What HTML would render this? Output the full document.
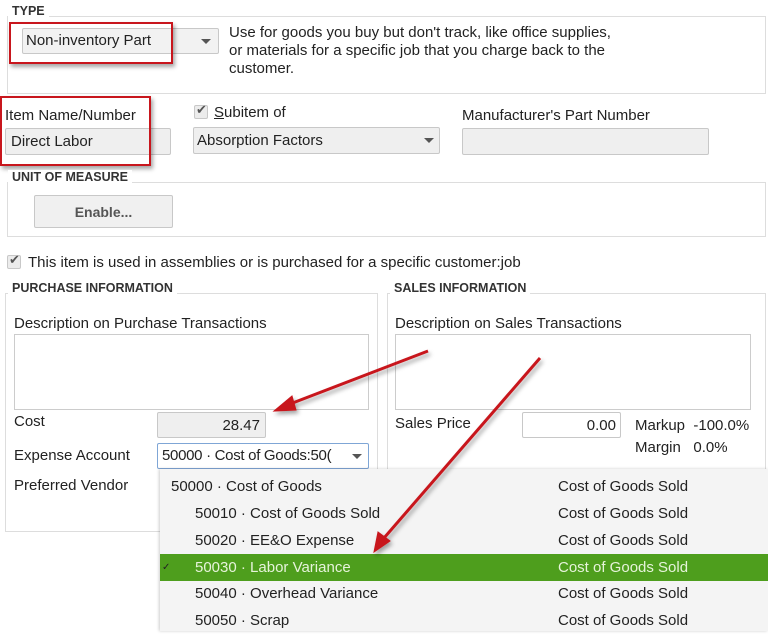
<!DOCTYPE html>
<html><head><meta charset="utf-8"><style>
body{margin:0;width:768px;height:631px;background:#fff;position:relative;overflow:hidden;font-family:"Liberation Sans",Arial,sans-serif;color:#222;font-size:15px}
.a{position:absolute;white-space:nowrap}
.grp{position:absolute;border:1px solid #ddd}
.h{position:absolute;font-size:12.5px;font-weight:bold;color:#333;background:#fff;padding:0 4px}
.fld{position:absolute;border:1px solid #c8c8c8;border-radius:2px;background:#efefef;box-sizing:border-box}
.red{position:absolute;border:2px solid #c8161d;box-shadow:2px 3px 4px rgba(0,0,0,.35)}
.tri{position:absolute;width:0;height:0;border-left:5px solid transparent;border-right:5px solid transparent;border-top:5px solid #555}
.row{position:absolute;left:160px;width:608px;height:27px;line-height:27px}
</style></head><body>
<div class="grp" style="left:7px;top:16px;width:757px;height:76px"></div>
<div class="h" style="left:8px;top:4px">TYPE</div>
<div class="fld" style="left:22px;top:28px;width:197px;height:26px;background:#f2f2f2"></div>
<div class="a" style="left:26px;top:32px">Non-inventory Part</div>
<div class="tri" style="left:201px;top:39px"></div>
<div class="red" style="left:9px;top:22px;width:160px;height:38px"></div>
<div class="a" style="left:229px;top:24px;line-height:18px">Use for goods you buy but don't track, like office supplies,<br>or materials for a specific job that you charge back to the<br>customer.</div>

<div class="a" style="left:5px;top:107px">Item Name/Number</div>
<div class="fld" style="left:5px;top:128px;width:166px;height:27px"></div>
<div class="a" style="left:11px;top:133px">Direct Labor</div>
<div class="red" style="left:0px;top:96px;width:147px;height:66px;box-shadow:2px 3px 4px rgba(0,0,0,.35)"></div>
<div class="fld" style="left:194px;top:105px;width:14px;height:14px;background:#ececec"></div>
<div class="a" style="left:196px;top:102px;font-size:13px;color:#555">✔</div>
<div class="a" style="left:214px;top:104px"><u>S</u>ubitem of</div>
<div class="fld" style="left:193px;top:127px;width:247px;height:27px"></div>
<div class="a" style="left:197px;top:132px">Absorption Factors</div>
<div class="tri" style="left:424px;top:138px"></div>
<div class="a" style="left:462px;top:107px">Manufacturer's Part Number</div>
<div class="fld" style="left:462px;top:128px;width:247px;height:27px"></div>

<div class="grp" style="left:7px;top:182px;width:757px;height:53px"></div>
<div class="h" style="left:8px;top:170px">UNIT OF MEASURE</div>
<div class="fld" style="left:34px;top:195px;width:139px;height:33px;background:#f0f0f0;text-align:center;line-height:32px;font-size:14px;font-weight:bold;color:#555">Enable...</div>

<div class="fld" style="left:7px;top:255px;width:14px;height:14px;background:#ececec"></div>
<div class="a" style="left:9px;top:252px;font-size:13px;color:#555">✔</div>
<div class="a" style="left:28px;top:254px">This item is used in assemblies or is purchased for a specific customer:job</div>

<div class="grp" style="left:5px;top:293px;width:371px;height:237px"></div>
<div class="h" style="left:8px;top:281px">PURCHASE INFORMATION</div>
<div class="grp" style="left:387px;top:293px;width:377px;height:176px"></div>
<div class="h" style="left:390px;top:281px">SALES INFORMATION</div>
<div class="a" style="left:14px;top:315px">Description on Purchase Transactions</div>
<div class="grp" style="left:14px;top:334px;width:353px;height:74px;border-color:#ccc"></div>
<div class="a" style="left:395px;top:315px">Description on Sales Transactions</div>
<div class="grp" style="left:395px;top:334px;width:354px;height:74px;border-color:#ccc"></div>

<div class="a" style="left:14px;top:413px">Cost</div>
<div class="fld" style="left:157px;top:412px;width:109px;height:26px;text-align:right;padding-right:5px;line-height:25px">28.47</div>
<div class="a" style="left:395px;top:415px">Sales Price</div>
<div class="fld" style="left:522px;top:412px;width:99px;height:26px;background:#fff;text-align:right;padding-right:4px;line-height:25px">0.00</div>
<div class="a" style="left:635px;top:417px">Markup &nbsp;-100.0%</div>
<div class="a" style="left:635px;top:439px">Margin &nbsp;&nbsp;0.0%</div>
<div class="a" style="left:14px;top:447px">Expense Account</div>
<div class="fld" style="left:157px;top:443px;width:212px;height:26px;background:#fff;border-color:#7fa6d6;line-height:24px;padding-left:4px;overflow:hidden;letter-spacing:-.3px">50000 · Cost of Goods:50(</div>
<div class="tri" style="left:352px;top:454px"></div>
<div class="a" style="left:14px;top:477px">Preferred Vendor</div>

<div class="a" style="left:160px;top:469px;width:608px;height:162px;background:#f4f4f4;box-shadow:-1px 0 3px rgba(0,0,0,.2)"></div>
<div class="row" style="top:473px"><span class="a" style="left:11px">50000 · Cost of Goods</span><span class="a" style="left:398px">Cost of Goods Sold</span></div>
<div class="row" style="top:500px"><span class="a" style="left:35px">50010 · Cost of Goods Sold</span><span class="a" style="left:398px">Cost of Goods Sold</span></div>
<div class="row" style="top:527px"><span class="a" style="left:35px">50020 · EE&amp;O Expense</span><span class="a" style="left:398px">Cost of Goods Sold</span></div>
<div class="row" style="top:554px;background:#4e9e1d;color:#e6f3da"><span class="a" style="left:2px;font-size:10px;color:#222">✓</span><span class="a" style="left:35px">50030 · Labor Variance</span><span class="a" style="left:398px">Cost of Goods Sold</span></div>
<div class="row" style="top:580px"><span class="a" style="left:35px">50040 · Overhead Variance</span><span class="a" style="left:398px">Cost of Goods Sold</span></div>
<div class="row" style="top:607px"><span class="a" style="left:35px">50050 · Scrap</span><span class="a" style="left:398px">Cost of Goods Sold</span></div>

<svg class="a" style="left:0;top:0" width="768" height="631">
<defs><filter id="s"><feDropShadow dx="2" dy="3" stdDeviation="2" flood-opacity=".35"/></filter></defs>
<g filter="url(#s)" stroke="#c8161d" fill="#c8161d" stroke-width="3">
<line x1="428" y1="351" x2="290" y2="404"/><polygon points="274,411 292,396 296,410" stroke-width="1"/>
<line x1="540" y1="358" x2="384" y2="538"/><polygon points="374,552 378,532 390,541" stroke-width="1"/>
</g></svg>
</body></html>
